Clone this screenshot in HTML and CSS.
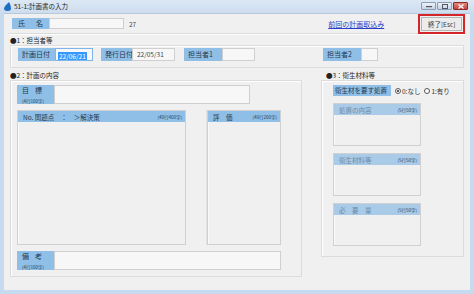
FILE: index.html
```html
<!DOCTYPE html>
<html lang="ja">
<head>
<meta charset="utf-8">
<link rel="stylesheet" href="styles.css">
</head>
<body>
<div class="win">
  <div class="titlebar">
    <svg class="appicon" width="8" height="9" viewBox="0 0 8 9"><path d="M5 0 C2 3 0 5 0 6.5 A3.5 2.5 0 0 0 7 6.5 C7 4 6 2 5 0Z" fill="#1e6fc0"/></svg>
    <span class="title">51-1:計画書の入力</span>
    <div class="ctrls">
      <span class="cbtn"><svg width="6" height="4"><rect x="0" y="2" width="6" height="1.2" fill="#556"/></svg></span>
      <span class="cbtn"><svg width="6" height="5"><rect x="0.5" y="0.5" width="5" height="4" fill="none" stroke="#556"/></svg></span>
      <span class="cbtn close"><svg width="6" height="5"><path d="M0.5 0.5L5.5 4.5M5.5 0.5L0.5 4.5" stroke="#fff" stroke-width="1.3"/></svg></span>
    </div>
  </div>
  <div class="client">
    <div class="toprow">
      <span class="lbl name-lbl"><span>氏</span><span>名</span></span>
      <span class="inp name-inp"></span>
      <span class="num">27</span>
      <a class="link">前回の計画取込み</a>
      <span class="exitwrap"><span class="exitbtn">終了[Esc]</span></span>
    </div>
    <div class="sep"></div>
    <div class="sec-title s1">●1：担当者等</div>
    <div class="group g1">
      <span class="lbl w37">計画日付</span>
      <span class="inp date focus"><span class="sel">22/06/21</span></span>
      <span class="lbl w31 ml8">発行日付</span>
      <span class="inp val">22/05/31</span>
      <span class="lbl w38 ml9">担当者1</span>
      <span class="inp staff1"></span>
      <span class="lbl w38 ml68">担当者2</span>
      <span class="inp staff2"></span>
    </div>
    <div class="cols">
      <div class="col2">
        <div class="sec-title">●2：計画の内容</div>
        <div class="group g2">
          <div class="row">
            <span class="lbl tall"><span class="big"><span>目</span><span>標</span></span><span class="small">(4行100字)</span></span>
            <span class="inp goal"></span>
          </div>
          <div class="panels">
            <div class="panel p-issue">
              <div class="phead"><span>No. 問題点　：　＞解決策</span><span class="small">(40行400字)</span></div>
            </div>
            <div class="splitter"></div>
            <div class="panel p-eval">
              <div class="phead"><span>評　価</span><span class="small">(40行200字)</span></div>
            </div>
          </div>
          <div class="row">
            <span class="lbl tall"><span class="big"><span>備</span><span>考</span></span><span class="small">(4行100字)</span></span>
            <span class="inp note"></span>
          </div>
        </div>
      </div>
      <div class="col3">
        <div class="sec-title">●3：衛生材料等</div>
        <div class="group g3">
          <div class="radrow">
            <span class="lbl w58">衛生材を要す処置</span>
            <span class="radio on"></span><span class="rtxt">0:なし</span>
            <span class="radio"></span><span class="rtxt">1:有り</span>
          </div>
          <div class="panel sp"><div class="phead dim"><span>処置の内容</span><span class="small">(5行50字)</span></div></div>
          <div class="panel sp"><div class="phead dim"><span>衛生材料等</span><span class="small">(5行50字)</span></div></div>
          <div class="panel sp"><div class="phead dim"><span>必　要　量</span><span class="small">(5行50字)</span></div></div>
        </div>
      </div>
    </div>
  </div>
</div>
</body>
</html>
```
FILE: styles.css
```css
* { box-sizing: border-box; }
html, body { margin: 0; padding: 0; }
body {
  width: 474px; height: 294px; overflow: hidden;
  font-family: "Noto Sans CJK JP", "Noto Sans", sans-serif;
  font-size: 7px; color: #333;
  background: #c7dbf0;
}
.win {
  width: 474px; height: 294px;
  background: #c7dbf0;
  padding: 0 4px 4px 4px;
  display: flex; flex-direction: column;
}
.titlebar {
  height: 13px; display: flex; align-items: center;
  margin: 0 -4px; padding-left: 4px;
  background: linear-gradient(#dde8f5, #cddcee);
}
.appicon { display: block; margin-right: 2px; }
.title { font-size: 6.5px; color: #222; line-height: 13px; }
.ctrls { margin-left: auto; margin-right: 6px; display: flex; gap: 1px; align-self: flex-start; margin-top: 2px; }
.cbtn {
  width: 15px; height: 8px; display: flex; align-items: center; justify-content: center;
  background: linear-gradient(#eef3f9, #c5d3e3); border: 1px solid #8a9cb2; border-radius: 1px;
}
.cbtn.close { background: linear-gradient(#e48a80, #c4403a); border-color: #8a2a28; }
.client {
  flex: 1; background: #f0f0f0; position: relative;
  border-top: 1px solid #b9c9dc;
}
.toprow { display: flex; align-items: center; height: 19px; padding-left: 8px; }
.lbl {
  background: #8fbfe6; color: #1f3850; height: 13px; line-height: 13px;
  font-size: 7px; padding: 0 4px; white-space: nowrap; display: inline-flex; align-items: center;
}
.name-lbl { width: 37px; height: 11px; justify-content: space-between; padding: 0 6px 0 6px; }
.inp { background: #f7f7f7; border: 1px solid #cfcfcf; height: 13px; display: inline-block; }
.name-inp { width: 75px; height: 11px; }
.num { margin-left: 5px; font-size: 6.5px; color: #444; }
.link { margin-left: 192px; color: #2a3cc8; text-decoration: underline; font-size: 7px; }
.exitwrap { margin-left: 34px; border: 2px solid #d4262a; width: 47px; height: 20px; padding: 1px; display: flex; }
.exitbtn { flex: 1; background: #ececec; border: 1px solid #b5b5b5; display: flex; align-items: center; justify-content: center; font-size: 6.5px; color: #333; }
.sep { height: 2px; background: #dadada; margin: 0 4px; border-bottom: 1px solid #fff; }
.sec-title { font-size: 6.5px; color: #222; height: 9px; line-height: 9px; padding-left: 6px; margin-top: 1px; }
.group { border: 1px solid #dcdcdc; box-shadow: inset 1px 1px 0 #fff; }
.g1 { margin: 0 6px; height: 23px; display: flex; align-items: flex-start; padding: 2px 0 0 7px; }
.w37 { width: 37px; } .w31 { width: 31px; } .w38 { width: 38px; } .w58 { width: 58px; }
.ml8 { margin-left: 8px; } .ml9 { margin-left: 9px; } .ml68 { margin-left: 68px; }
.date { width: 38px; border: 1px solid #7eb4ea; padding: 2px 2px; }
.sel { background: #3399ff; color: #fff; font-size: 6.5px; line-height: 8px; display: inline-block; padding: 0 1px; }
.val { width: 43px; font-size: 6.5px; color: #444; line-height: 11px; padding-left: 4px; }
.staff1 { width: 33px; }
.staff2 { width: 17px; }
.cols { display: flex; margin-top: 2px; }
.col2 { width: 304px; }
.col2 .sec-title { padding-left: 6px; }
.g2 { margin-left: 6px; width: 292px; height: 197px; padding: 4px 0 0 6px; }
.row { display: flex; }
.tall { width: 37px; height: 19px; flex-direction: column; align-items: stretch; line-height: 1; padding: 2px 4px 1px 5px; justify-content: space-between; }
.big { display: flex; justify-content: space-between; padding-right: 8px; font-size: 7px; }
.small { font-size: 4.5px; color: #24405e; }
.goal { width: 196px; height: 19px; }
.note { width: 227px; height: 19px; }
.panels { display: flex; margin: 6px 0 6px 0; height: 135px; }
.panel { border: 1px solid #d0d0d0; background: #f0f0f0; box-shadow: inset 1px 1px 0 #fafafa; }
.p-issue { width: 169px; }
.splitter { width: 21px; border-right: 1px solid #e2e2e2; margin-right: 0; }
.p-eval { width: 74px; }
.phead {
  background: #8fbfe6; height: 11px; display: flex; justify-content: space-between; align-items: center;
  padding: 0 3px 0 5px; font-size: 6.5px; color: #1f3850;
}
.phead.dim { background: #a9cbe8; color: #6a8aa6; }
.col3 { margin-left: 13px; width: 143px; }
.col3 .sec-title { padding-left: 5px; }
.g3 { height: 177px; padding: 3px 0 0 11px; }
.radrow { display: flex; align-items: center; height: 13px; }
.radrow .lbl { width: 58px; height: 11px; padding: 0 2px; font-size: 6.5px; }
.radio { width: 6px; height: 6px; border: 1px solid #555; border-radius: 50%; margin-left: 4px; background: #fff; position: relative; }
.radio.on::after { content: ""; position: absolute; left: 1px; top: 1px; width: 2px; height: 2px; background: #222; border-radius: 50%; }
.rtxt { font-size: 6.5px; margin-left: 1px; color: #333; }
.sp { width: 88px; height: 43px; margin-top: 7px; }
.g3 .panel:nth-child(2) { margin-top: 6px; }
```
